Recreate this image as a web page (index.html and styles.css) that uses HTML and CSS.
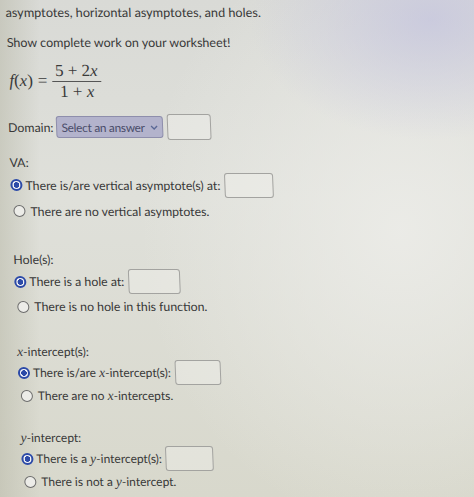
FILE: index.html
```html
<!DOCTYPE html>
<html>
<head>
<meta charset="utf-8">
<link rel="stylesheet" href="styles.css">
</head>
<body>
<div class="page">
  <p class="intro first">asymptotes, horizontal asymptotes, and holes.</p>
  <p class="intro second">Show complete work on your worksheet!</p>

  <div class="func">
    <span class="m"><i class="mi">f</i>(<i class="mi">x</i>)</span>
    <span class="eq">=</span>
    <span class="frac">
      <span class="num">5 + 2<i class="mi">x</i></span>
      <span class="den">1 + <i class="mi">x</i></span>
    </span>
  </div>

  <div class="domain">
    <span class="lbl">Domain:</span>
    <span class="select">Select an answer
      <svg class="chev" width="8" height="5" viewBox="0 0 8 5"><path d="M1 1 L4 4 L7 1" fill="none" stroke="#5a6896" stroke-width="1.3"/></svg>
    </span>
    <span class="input w44"></span>
  </div>

  <div class="group g1">
    <div class="glabel">VA:</div>
    <div class="opt"><span class="radio on"></span><span>There is/are vertical asymptote(s) at:</span><span class="input w49"></span></div>
    <div class="opt"><span class="radio"></span><span>There are no vertical asymptotes.</span></div>
  </div>

  <div class="group g2">
    <div class="glabel">Hole(s):</div>
    <div class="opt"><span class="radio on"></span><span>There is a hole at:</span><span class="input w52"></span></div>
    <div class="opt"><span class="radio"></span><span>There is no hole in this function.</span></div>
  </div>

  <div class="group g3">
    <div class="glabel"><i class="v">x</i>-intercept(s):</div>
    <div class="opt"><span class="radio on"></span><span>There is/are <i class="v">x</i>-intercept(s):</span><span class="input w46"></span></div>
    <div class="opt"><span class="radio"></span><span>There are no <i class="v">x</i>-intercepts.</span></div>
  </div>

  <div class="group g4">
    <div class="glabel"><i class="v">y</i>-intercept:</div>
    <div class="opt"><span class="radio on"></span><span>There is a <i class="v">y</i>-intercept(s):</span><span class="input w48"></span></div>
    <div class="opt"><span class="radio"></span><span>There is not a <i class="v">y</i>-intercept.</span></div>
  </div>
</div>
</body>
</html>
```
FILE: styles.css
```css
html, body {
  margin: 0;
  padding: 0;
  width: 474px;
  height: 497px;
  overflow: hidden;
}
body {
  background:
    radial-gradient(ellipse 180px 120px at 430px 20px, rgba(196, 196, 222, 0.75), rgba(196, 196, 222, 0) 100%),
    radial-gradient(ellipse 260px 300px at 400px 230px, rgba(236, 236, 232, 0.9), rgba(236, 236, 232, 0) 100%),
    linear-gradient(90deg, rgba(186, 186, 170, 0.55) 0px, rgba(186, 186, 170, 0) 40px),
    linear-gradient(180deg, #d9dad6 0%, #dfe0da 40%, #d8d8cc 100%);
  font-family: Lato, "Open Sans", sans-serif;
  color: #383838;
  font-size: 12.3px;
}
.page {
  padding: 3px 0 0 3px;
  transform: skewX(2.3deg);
  transform-origin: 0 0;
}
.intro {
  margin: 0;
  padding-left: 2px;
  line-height: 18px;
  font-size: 12.7px;
}
.second {
  margin-top: 13px;
  font-size: 12.5px;
}
.func {
  margin-top: 10px;
  height: 38px;
  display: flex;
  align-items: center;
  font-family: "Liberation Serif", serif;
  font-size: 17px;
  color: #3a3a3a;
  padding-left: 3px;
}
.func .mi {
  font-family: "Liberation Serif", serif;
  font-style: italic;
}
.eq { margin: 0 5px 0 5px; }
.frac {
  display: flex;
  flex-direction: column;
  align-items: center;
  line-height: 18px;
}
.num {
  padding: 0 3px 1px;
  border-bottom: 1.2px solid #555;
}
.den { padding-top: 1px; }

.domain {
  margin-top: 14px;
  height: 26px;
  display: flex;
  align-items: center;
}
.lbl { margin-right: 3px; }
.select {
  height: 20px;
  display: flex;
  align-items: center;
  gap: 5px;
  padding: 0 4px 0 4px;
  background: #b3b3cc;
  border: 1px solid #8e8eac;
  border-radius: 3px;
  color: #4a4d6a;
  font-size: 11.8px;
  letter-spacing: -0.25px;
}
.chev { display: block; }

.input {
  display: inline-block;
  height: 23px;
  border: 1.2px solid #a3a3a0;
  border-radius: 3px;
  background: rgba(240, 240, 236, 0.45);
  margin-left: 4px;
}
.w44 { width: 42px; height: 24px; }
.w49 { width: 47px; }
.w52 { width: 50px; }
.w46 { width: 44px; }
.w48 { width: 46px; }

.g1 { margin-top: 14px; }
.g2 { margin-top: 27px; }
.g3 { margin-top: 24px; font-size: 12px; }
.g4 { margin-top: 21px; font-size: 12px; }
.glabel {
  line-height: 18px;
}
.opt {
  height: 26px;
  display: flex;
  align-items: center;
}
.g2 .opt { height: 25px; }
.g3 .opt { height: 23.5px; }
.g4 .opt { height: 23px; }
.opt + .opt { padding-left: 2px; }
.radio {
  width: 12px;
  height: 12px;
  box-sizing: border-box;
  border-radius: 50%;
  border: 1.6px solid #6b6b6b;
  background: #ecece8;
  margin-right: 5px;
  flex: none;
}
.radio.on {
  border: 2px solid #2c4aa8;
  background: radial-gradient(circle, #2c4aa8 0 2.6px, #f4f4f8 3px);
  margin-right: 3px;
}
.v {
  font-family: "Liberation Serif", serif;
  font-style: italic;
  font-size: 13.5px;
}
```
